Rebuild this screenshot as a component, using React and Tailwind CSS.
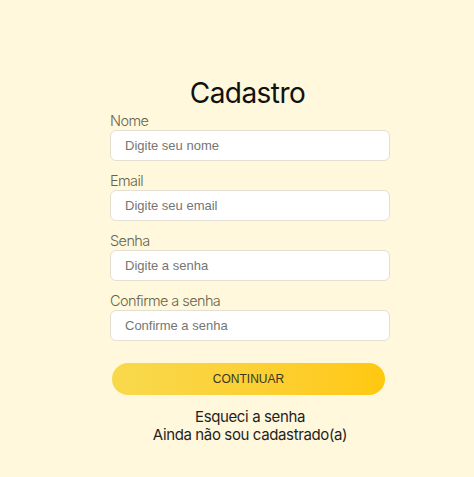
import React, { useState } from 'react';

const fields = [
  { id: 'nome', label: 'Nome', placeholder: 'Digite seu nome', type: 'text' },
  { id: 'email', label: 'Email', placeholder: 'Digite seu email', type: 'email' },
  { id: 'senha', label: 'Senha', placeholder: 'Digite a senha', type: 'password' },
  { id: 'confirme', label: 'Confirme a senha', placeholder: 'Confirme a senha', type: 'password' },
];

const App = () => {
  const [values, setValues] = useState({});

  const handleChange = (id) => (event) =>
    setValues((prev) => ({ ...prev, [id]: event.target.value }));

  return (
    <div className="min-h-[477px] w-full bg-[#fff8dc] font-['Inter',sans-serif]">
      <form
        className="ml-[110px] w-[280px] pt-[76px] flex flex-col"
        onSubmit={(event) => event.preventDefault()}
      >
        <h1 className="pr-[5px] text-center text-[28px] leading-[35px] tracking-[-0.02em] font-normal text-[#111]">
          Cadastro
        </h1>

        <div className="flex flex-col gap-[10px]">
          {fields.map((field) => (
            <div key={field.id} className="flex flex-col">
              <label
                htmlFor={field.id}
                className="text-[14.5px] leading-[19px] tracking-[-0.04em] font-light text-[#69634a]"
              >
                {field.label}
              </label>
              <input
                id={field.id}
                type={field.type}
                placeholder={field.placeholder}
                value={values[field.id] || ''}
                onChange={handleChange(field.id)}
                className="h-[31px] w-full rounded-[6px] border border-[#e3dfd2] bg-white pl-[14px] font-['Liberation_Sans',Arial,sans-serif] text-[13px] text-[#333] placeholder:text-[#757575] outline-none"
              />
            </div>
          ))}
        </div>

        <button
          type="submit"
          className="mt-[22px] ml-[2px] h-[32px] w-[273px] rounded-full bg-gradient-to-r from-[#f8d94c] to-[#ffc80c] font-['Liberation_Sans',Arial,sans-serif] text-[12px] text-[#3a3622]"
        >
          CONTINUAR
        </button>

        <div className="mt-[13px] flex flex-col items-center text-[15px] leading-[18px] tracking-[-0.025em] text-[#1f1f1f]">
          <a href="#">Esqueci a senha</a>
          <a href="#">Ainda não sou cadastrado(a)</a>
        </div>
      </form>
    </div>
  );
};

export default App;
